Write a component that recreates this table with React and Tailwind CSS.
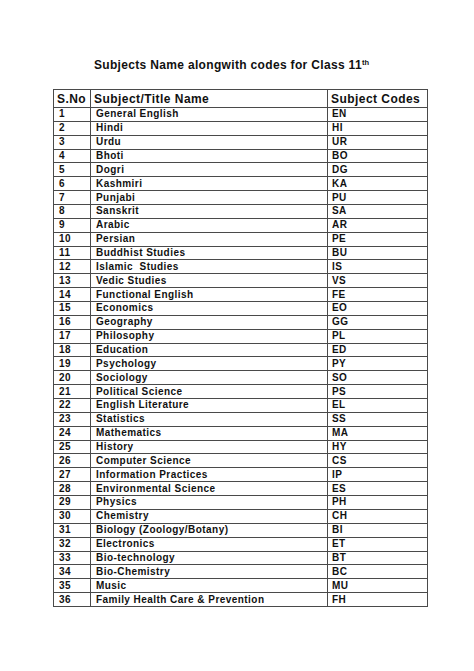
const subjects = [
  ["General English", "EN"],
  ["Hindi", "HI"],
  ["Urdu", "UR"],
  ["Bhoti", "BO"],
  ["Dogri", "DG"],
  ["Kashmiri", "KA"],
  ["Punjabi", "PU"],
  ["Sanskrit", "SA"],
  ["Arabic", "AR"],
  ["Persian", "PE"],
  ["Buddhist Studies", "BU"],
  ["Islamic\u00a0 Studies", "IS"],
  ["Vedic Studies", "VS"],
  ["Functional English", "FE"],
  ["Economics", "EO"],
  ["Geography", "GG"],
  ["Philosophy", "PL"],
  ["Education", "ED"],
  ["Psychology", "PY"],
  ["Sociology", "SO"],
  ["Political Science", "PS"],
  ["English Literature", "EL"],
  ["Statistics", "SS"],
  ["Mathematics", "MA"],
  ["History", "HY"],
  ["Computer Science", "CS"],
  ["Information Practices", "IP"],
  ["Environmental Science", "ES"],
  ["Physics", "PH"],
  ["Chemistry", "CH"],
  ["Biology (Zoology/Botany)", "BI"],
  ["Electronics", "ET"],
  ["Bio-technology", "BT"],
  ["Bio-Chemistry", "BC"],
  ["Music", "MU"],
  ["Family Health Care & Prevention", "FH"],
];

export default function App() {
  return (
    <div className="w-[474px] h-[671px] bg-white text-[#111] font-['Liberation_Sans',Arial,sans-serif] overflow-hidden">
      <h1 className="pt-[58px] pr-[11px] text-center text-[12px] font-bold leading-[14px] tracking-[0.33px]">
        Subjects Name alongwith codes for Class 11<sup className="text-[7.5px] tracking-normal">th</sup>
      </h1>

      <table className="mt-[17px] ml-[53px] w-[374px] border-collapse border-[1.5px] border-[#4a4a4a] table-fixed">
        <colgroup>
          <col className="w-[37px]" />
          <col className="w-[237px]" />
          <col className="w-[100px]" />
        </colgroup>
        <thead>
          <tr className="h-[18px]">
            <th className="border border-[#4a4a4a] text-left font-bold text-[12px] tracking-[0.45px] pl-[3px] p-0 leading-none">S.No</th>
            <th className="border border-[#4a4a4a] text-left font-bold text-[12px] tracking-[0.45px] pl-[3px] p-0 leading-none">Subject/Title Name</th>
            <th className="border border-[#4a4a4a] text-left font-bold text-[12px] tracking-[0.45px] pl-[3px] p-0 leading-none">Subject Codes</th>
          </tr>
        </thead>
        <tbody>
          {subjects.map(([name, code], i) => (
            <tr key={code} className="h-[13.86px]">
              <td className="border border-[#4a4a4a] text-[10px] tracking-[0.45px] font-bold pl-[5px] p-0 leading-none">{i + 1}</td>
              <td className="border border-[#4a4a4a] text-[10px] tracking-[0.45px] font-bold pl-[5px] p-0 leading-none whitespace-pre">{name}</td>
              <td className="border border-[#4a4a4a] text-[10px] tracking-[0.45px] font-bold pl-[4px] p-0 leading-none">{code}</td>
            </tr>
          ))}
        </tbody>
      </table>
    </div>
  );
}
